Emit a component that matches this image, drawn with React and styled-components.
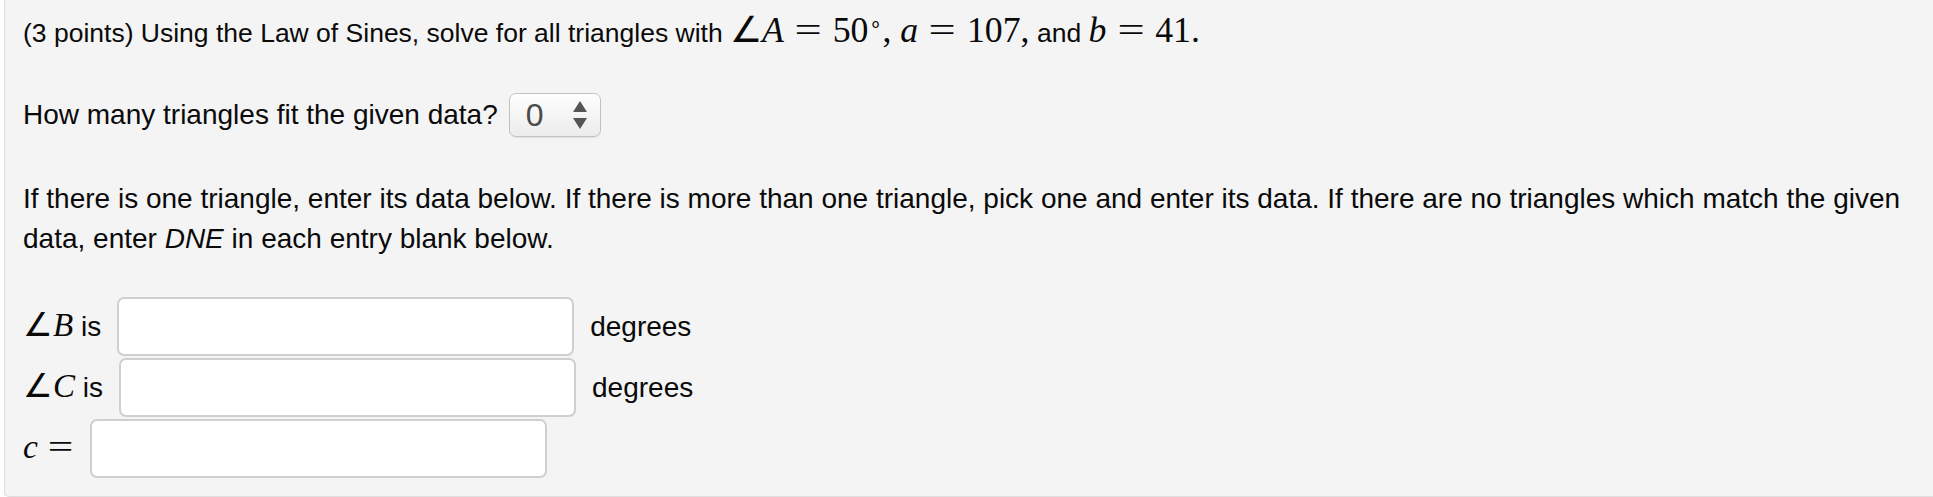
import React from 'react';
import styled, { createGlobalStyle } from 'styled-components';

const GlobalStyle = createGlobalStyle`
  html, body {
    margin: 0;
    padding: 0;
    background: #ffffff;
    overflow: hidden;
  }
  body {
    font-family: "Liberation Sans", Arial, Helvetica, sans-serif;
    color: #0a0a0a;
  }
`;

const Panel = styled.div`
  box-sizing: border-box;
  margin-left: 4px;
  width: calc(100% + 20px);
  padding: 13px 0 18px 18px;
  background: #f4f4f4;
  border-left: 1px solid #dedede;
  border-bottom: 1px solid #dedede;
  border-bottom-left-radius: 5px;
  font-size: 28px;
  line-height: 40px;
`;

const Line = styled.p`
  margin: 0;
  height: 40px;
  font-size: ${(p) => p.$size || 28}px;
  white-space: nowrap;
`;

const Para = styled.p`
  margin: 42px 0 0;
  width: 1895px;
`;

const CountRow = styled.div`
  display: flex;
  align-items: center;
  gap: 11px;
  margin-top: 40px;
  height: 44px;
`;

// inline TeX-style math: serif, italic variables, wide relations
const Math = styled.span`
  font-family: "Liberation Serif", "Times New Roman", serif;
  font-size: ${(p) => p.$scale || 1.35}em;
  line-height: 1;
  white-space: nowrap;
`;

const Var = styled.i`
  font-style: italic;
`;

const Deg = styled.span`
  font-size: 0.6em;
  vertical-align: 0.55em;
  margin-left: 1px;
`;

const Eq = styled.span`
  display: inline-block;
  margin: 0 ${(p) => (p.$end ? '0.1em' : '0.4em')} 0 0.4em;
  transform: scaleX(1.35);
`;

const Select = styled.div`
  box-sizing: border-box;
  display: flex;
  align-items: center;
  justify-content: space-between;
  width: 92px;
  height: 44px;
  padding: 0 13px 0 16px;
  border: 1px solid #c2c2c2;
  border-radius: 7px;
  background: linear-gradient(#fefefe, #ececec);
  box-shadow: inset 0 1px 0 #fff, 0 1px 1px rgba(0, 0, 0, 0.08);
  color: #4b4b4b;
  font-size: 32px;
`;

const Fields = styled.div`
  display: flex;
  flex-direction: column;
  gap: 2px;
  margin-top: 38px;
`;

const FieldRow = styled.div`
  display: flex;
  align-items: center;
  gap: 16px;
`;

const Label = styled.span`
  white-space: nowrap;
`;

const Input = styled.input`
  box-sizing: border-box;
  width: 457px;
  height: 59px;
  margin: 0;
  border: 2px solid #cfcfcf;
  border-radius: 7px;
  background: #fff;
  font: inherit;
`;

const Arrows = () => (
  <svg width="14" height="28" viewBox="0 0 14 28" aria-hidden="true">
    <path d="M7 0 L14 11 L0 11 Z" fill="#555" />
    <path d="M0 17 L14 17 L7 28 Z" fill="#555" />
  </svg>
);

const fields = [
  { key: 'B', label: <><Math $scale={1.18}>∠<Var>B</Var></Math> is</>, unit: 'degrees' },
  { key: 'C', label: <><Math $scale={1.18}>∠<Var>C</Var></Math> is</>, unit: 'degrees' },
  { key: 'c', label: <Math $scale={1.2}><Var>c</Var><Eq $end>=</Eq></Math> },
];

export default function App() {
  return (
    <>
      <GlobalStyle />
      <Panel>
        <Line $size={26.5}>
          (3 points) Using the Law of Sines, solve for all triangles with{' '}
          <Math>
            ∠<Var>A</Var>
            <Eq>=</Eq>50<Deg>∘</Deg>, <Var>a</Var>
            <Eq>=</Eq>107,
          </Math>{' '}
          and{' '}
          <Math>
            <Var>b</Var>
            <Eq>=</Eq>41.
          </Math>
        </Line>
        <CountRow>
          <span>How many triangles fit the given data?</span>
          <Select>
            <span>0</span>
            <Arrows />
          </Select>
        </CountRow>
        <Para>
          If there is one triangle, enter its data below. If there is more than one triangle, pick one
          and enter its data. If there are no triangles which match the given data, enter <i>DNE</i> in
          each entry blank below.
        </Para>
        <Fields>
          {fields.map((f) => (
            <FieldRow key={f.key}>
              <Label>{f.label}</Label>
              <Input type="text" />
              {f.unit && <span>{f.unit}</span>}
            </FieldRow>
          ))}
        </Fields>
      </Panel>
    </>
  );
}
